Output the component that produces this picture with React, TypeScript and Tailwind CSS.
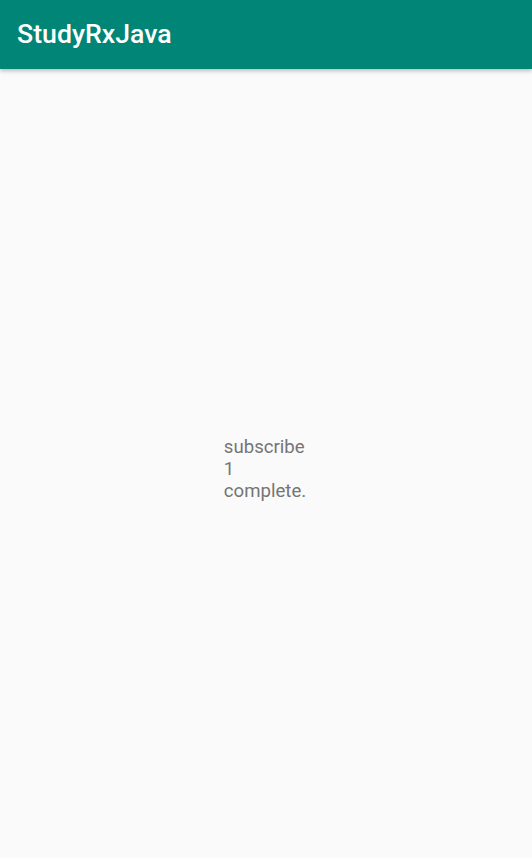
export default function App() {
  return (
    <div className="flex h-[858px] w-[532px] flex-col bg-[#fafafa] font-['Roboto',sans-serif]">
      {/* Toolbar */}
      <header className="relative z-10 flex h-[69px] shrink-0 items-center bg-[#008577] px-[17px] shadow-[0_2px_4px_rgba(0,0,0,0.25)]">
        <h1 className="text-[26.7px] font-medium text-white">StudyRxJava</h1>
      </header>

      {/* Content */}
      <main className="flex flex-1 items-center justify-center pt-[11px] pr-[2px]">
        <p className="text-[18.6px] leading-[22px] text-[#757575]">
          subscribe
          <br />
          1
          <br />
          complete.
        </p>
      </main>
    </div>
  );
}
